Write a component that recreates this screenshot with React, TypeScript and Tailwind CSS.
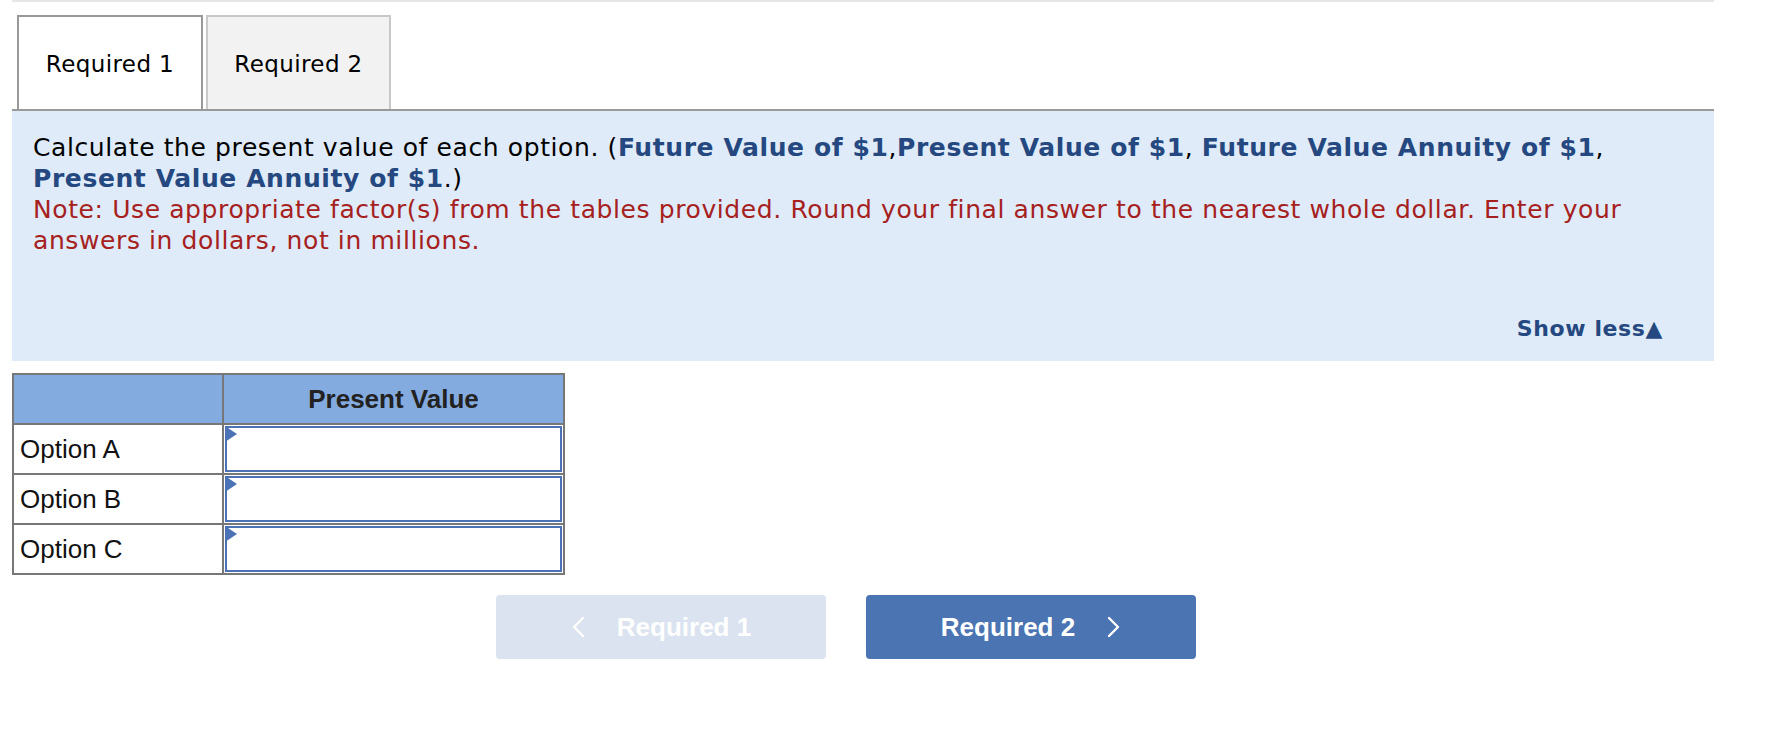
import React from "react";

const rows = ["Option A", "Option B", "Option C"];

function Chevron({ dir }: { dir: "left" | "right" }) {
  return (
    <svg width="14" height="22" viewBox="0 0 14 22" fill="none">
      <polyline
        points={dir === "left" ? "12,2 3,11 12,20" : "2,2 11,11 2,20"}
        stroke="currentColor"
        strokeWidth="2.4"
        strokeLinecap="round"
        strokeLinejoin="round"
      />
    </svg>
  );
}

function InputCell() {
  return (
    <div className="relative flex-1 p-px">
      <div className="h-full w-full border-2 border-[#4a72b5] bg-white" />
      <svg
        className="absolute left-px top-px"
        width="12"
        height="17"
        viewBox="0 0 12 17"
      >
        <polygon points="0,0 12,8 0,16" fill="#4a72b5" />
      </svg>
    </div>
  );
}

export default function App() {
  return (
    <div className="min-h-[736px] w-[1784px] bg-white">
      <div className="ml-[12px] w-[1702px]">
        <div className="h-[2px] bg-[#e6e6e6]" />

        {/* tabs */}
        <div className="mt-[13px] flex gap-[3px] pl-[5px] font-['DejaVu_Sans','Verdana',sans-serif] text-[23px] tracking-[0.4px] text-black">
          <div className="flex h-[94px] w-[186px] items-center justify-center border-2 border-b-0 border-[#999999] bg-white pt-[2px]">
            Required 1
          </div>
          <div className="flex h-[94px] w-[185px] items-center justify-center border-2 border-b-0 border-[#c8c8c8] bg-[#f2f2f2] pt-[2px]">
            Required 2
          </div>
        </div>
        <div className="h-[2px] bg-[#999999]" />

        {/* instructions */}
        <div className="flex h-[250px] flex-col bg-[#dfebf8] pl-[21px] pr-[20px] pt-[21px] pb-[19px] font-['DejaVu_Sans','Verdana',sans-serif]">
          <div className="text-[25px] leading-[31px] tracking-[0.6px]">
            <p className="text-black">
              Calculate the present value of each option. (
              <span className="font-bold text-[#24487f]">Future Value of $1</span>,
              <span className="font-bold text-[#24487f]">Present Value of $1</span>,{" "}
              <span className="font-bold text-[#24487f]">Future Value Annuity of $1</span>,{" "}
              <span className="font-bold text-[#24487f]">Present Value Annuity of $1</span>.)
            </p>
            <p className="text-[#a6211d]">
              Note: Use appropriate factor(s) from the tables provided. Round your final answer to the nearest whole dollar. Enter your answers in dollars, not in millions.
            </p>
          </div>
          <div className="mt-auto flex justify-end pr-[31px] text-[22px] font-bold leading-[26px] tracking-[0.6px] text-[#24487f]">
            Show less▲
          </div>
        </div>

        {/* table */}
        <div className="mt-[12px] w-[553px] border-2 border-[#777777] font-['Liberation_Sans',Arial,sans-serif]">
          <div className="flex h-[48px] bg-[#84abdf]">
            <div className="w-[210px] border-r-2 border-[#777777]" />
            <div className="flex flex-1 items-center justify-center text-[26px] font-bold text-[#222222]">
              Present Value
            </div>
          </div>
          {rows.map((label) => (
            <div key={label} className="flex h-[50px] border-t-2 border-[#777777]">
              <div className="flex w-[210px] items-center border-r-2 border-[#777777] pl-[6px] text-[26px] text-[#111111]">
                {label}
              </div>
              <InputCell />
            </div>
          ))}
        </div>

        {/* navigation */}
        <div className="mt-[20px] flex gap-[40px] pl-[484px] font-['Liberation_Sans',Arial,sans-serif] text-[26px] font-bold text-white">
          <button className="flex h-[64px] w-[330px] items-center justify-center gap-[32px] rounded-[4px] bg-[#dae3ef]">
            <Chevron dir="left" />
            <span>Required 1</span>
          </button>
          <button className="flex h-[64px] w-[330px] items-center justify-center gap-[32px] rounded-[4px] bg-[#4a74b2]">
            <span>Required 2</span>
            <Chevron dir="right" />
          </button>
        </div>
      </div>
    </div>
  );
}
